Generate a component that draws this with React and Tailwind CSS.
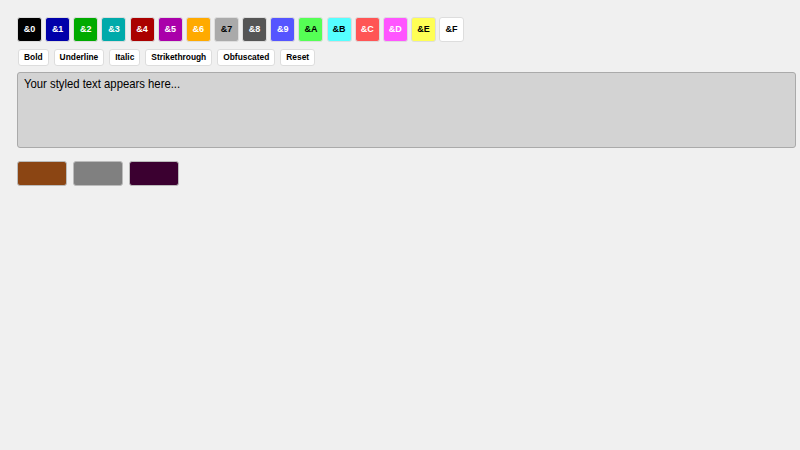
import React from "react";

const codes = [
  { c: "&0", bg: "bg-[#000000]", fg: "text-white" },
  { c: "&1", bg: "bg-[#0000aa]", fg: "text-white" },
  { c: "&2", bg: "bg-[#00aa00]", fg: "text-white" },
  { c: "&3", bg: "bg-[#00aaaa]", fg: "text-white" },
  { c: "&4", bg: "bg-[#aa0000]", fg: "text-white" },
  { c: "&5", bg: "bg-[#aa00aa]", fg: "text-white" },
  { c: "&6", bg: "bg-[#ffaa00]", fg: "text-white" },
  { c: "&7", bg: "bg-[#aaaaaa]", fg: "text-black" },
  { c: "&8", bg: "bg-[#555555]", fg: "text-white" },
  { c: "&9", bg: "bg-[#5555ff]", fg: "text-white" },
  { c: "&A", bg: "bg-[#55ff55]", fg: "text-black" },
  { c: "&B", bg: "bg-[#55ffff]", fg: "text-black" },
  { c: "&C", bg: "bg-[#ff5555]", fg: "text-white" },
  { c: "&D", bg: "bg-[#ff55ff]", fg: "text-white" },
  { c: "&E", bg: "bg-[#ffff55]", fg: "text-black" },
  { c: "&F", bg: "bg-[#ffffff]", fg: "text-black" },
];

const formats = ["Bold", "Underline", "Italic", "Strikethrough", "Obfuscated", "Reset"];

export default function App() {
  return (
    <div className="min-h-[450px] bg-[#f0f0f0] px-[17px] pt-[17px] font-['Liberation_Sans',Arial,sans-serif]">
      <div className="flex gap-[3.15px]">
        {codes.map((k) => (
          <button
            key={k.c}
            className={`${k.bg} ${k.fg} flex h-[25px] w-[25px] items-center justify-center rounded-[3px] border border-[#dddddd] text-[9px] font-bold`}
          >
            {k.c}
          </button>
        ))}
      </div>
      <div className="mt-[7px] flex gap-[5px] pl-[1px]">
        {formats.map((f) => (
          <button
            key={f}
            className="flex h-[17px] items-center rounded-[3px] border border-[#dddddd] bg-white px-[5px] text-[8.4px] font-bold text-black"
          >
            {f}
          </button>
        ))}
      </div>
      <div className="mt-[6px] mr-[-13px] h-[76px] rounded-[3px] border border-[#aaaaaa] bg-[#d3d3d3] px-[6px] pt-[1px] text-[13px] text-black">
        <span className="inline-block origin-left scale-x-[0.87]">Your styled text appears here...</span>
      </div>
      <div className="mt-[13px] flex gap-[6px]">
        <div className="h-[25px] w-[50px] rounded-[3px] border border-[#bbbbbb] bg-[#8b4513]" />
        <div className="h-[25px] w-[50px] rounded-[3px] border border-[#bbbbbb] bg-[#808080]" />
        <div className="h-[25px] w-[50px] rounded-[3px] border border-[#bbbbbb] bg-[#3b0030]" />
      </div>
    </div>
  );
}
